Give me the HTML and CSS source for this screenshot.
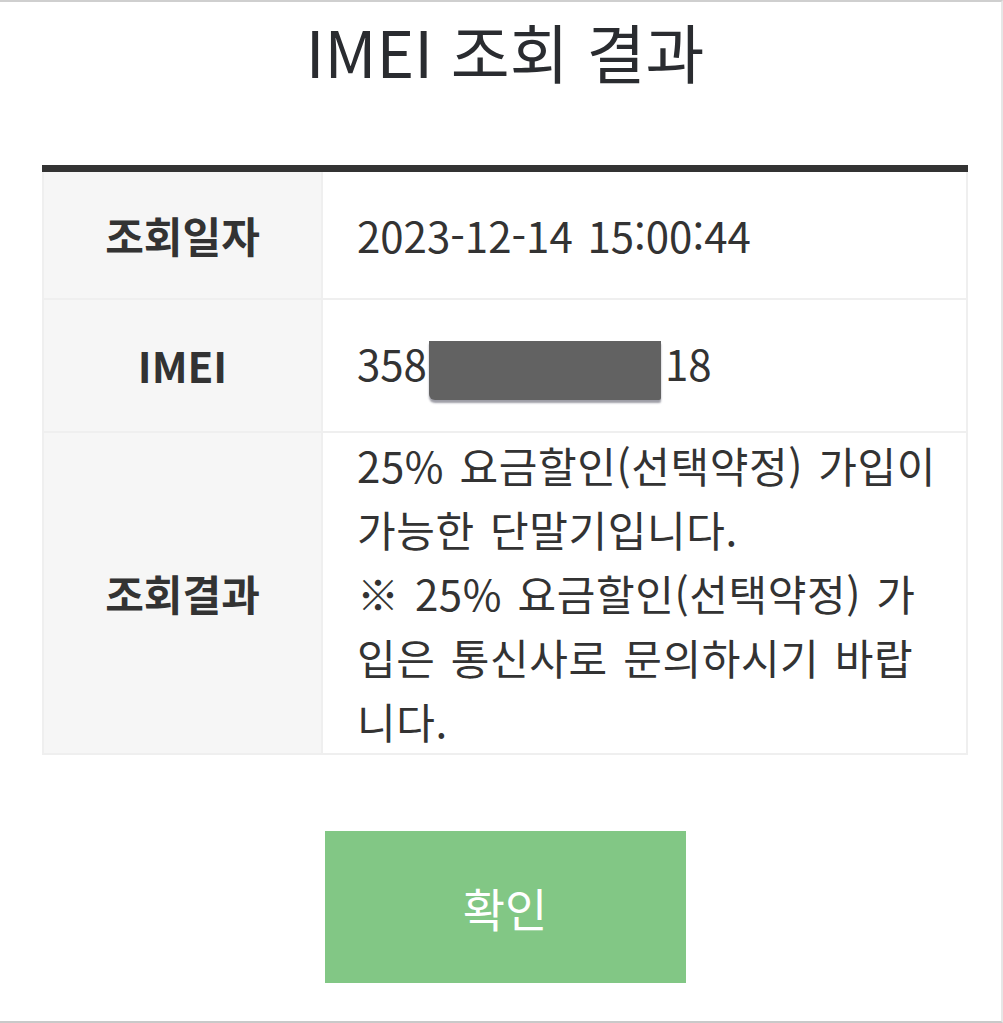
FILE: index.html
```html
<!DOCTYPE html>
<html lang="ko">
<head>
  <meta charset="UTF-8" />
  <meta name="viewport" content="width=device-width, initial-scale=1.0"/>
  <title>IMEI 조회 결과</title>
  <link rel="stylesheet" href="styles.css">
</head>
<body>
  <div class="popup">
    <div class="content">
      <h1 class="title">IMEI 조회 결과</h1>

      <!-- 결과 테이블 -->
      <table class="result">
        <tr class="row-date">
          <th>조회일자</th>
          <td>2023-12-14 15:00:44</td>
        </tr>
        <tr class="row-imei">
          <th>IMEI</th>
          <td>358<span class="mask"></span>18</td>
        </tr>
        <tr>
          <th>조회결과</th>
          <td class="msg">25% 요금할인(선택약정) 가입이 가능한 단말기입니다.<br>※ 25% 요금할인(선택약정) 가입은 통신사로 문의하시기 바랍니다.</td>
        </tr>
      </table>

      <div class="actions">
        <button class="btn-ok" type="button">확인</button>
      </div>
    </div>
  </div>
</body>
</html>
```

FILE: styles.css
```css
/*
  기본 리셋
*/
* {
  margin: 0;
  padding: 0;
  box-sizing: border-box;
}

body {
  background: #fff;
  font-family: "Noto Sans CJK KR", "Noto Sans", sans-serif;
  color: #333;
}

/* 팝업 바깥 테두리 */
.popup {
  width: 1003px;
  height: 1023px;
  border-top: 2px solid #cfcfcf;
  border-right: 2px solid #e6e6e6;
  border-bottom: 2px solid #c9c9c9;
}

.content {
  width: 926px;
  margin-left: 42px;
}

/* 제목 */
.title {
  margin-top: 16px;
  font-size: 64px;
  font-weight: 400;
  line-height: 1;
  text-align: center;
  color: #2a2c30;
}

/* 결과 테이블 */
.result {
  width: 100%;
  margin-top: 83px;
  border-collapse: collapse;
  border-top: 7px solid #333;
  font-size: 42px;
}

.result th,
.result td {
  border: 2px solid #efefef;
  border-top: 0;
  line-height: 64px;
  vertical-align: middle;
}

.result th {
  width: 279px;
  background: #f6f6f6;
  font-weight: 700;
  color: #333;
  text-align: center;
}

.result td {
  padding: 0 16px 0 34px;
  text-align: left;
  color: #333;
  word-spacing: 3px;
}

.row-date {
  height: 130px;
}

.row-imei {
  height: 133px;
}

/* 안내 문구: 참고 화면처럼 줄바꿈되도록 간격 보정 */
.msg {
  padding-top: 1px;
  padding-bottom: 1px;
  word-spacing: 6px;
  letter-spacing: 0.6px;
}

/* 가려진 IMEI 부분 */
.mask {
  display: inline-block;
  width: 232px;
  height: 59px;
  margin: 0 4px 0 2px;
  background: #626262;
  border-radius: 0 0 2px 6px;
  box-shadow: 0 3px 2px rgba(40, 40, 60, 0.45);
  vertical-align: -19px;
}

/* 확인 버튼 */
.actions {
  display: flex;
  justify-content: center;
  margin-top: 76px;
}

.btn-ok {
  width: 361px;
  height: 152px;
  border: 0;
  background: #82c785;
  color: #fff;
  font-family: inherit;
  font-size: 46px;
  font-weight: 400;
}
```
